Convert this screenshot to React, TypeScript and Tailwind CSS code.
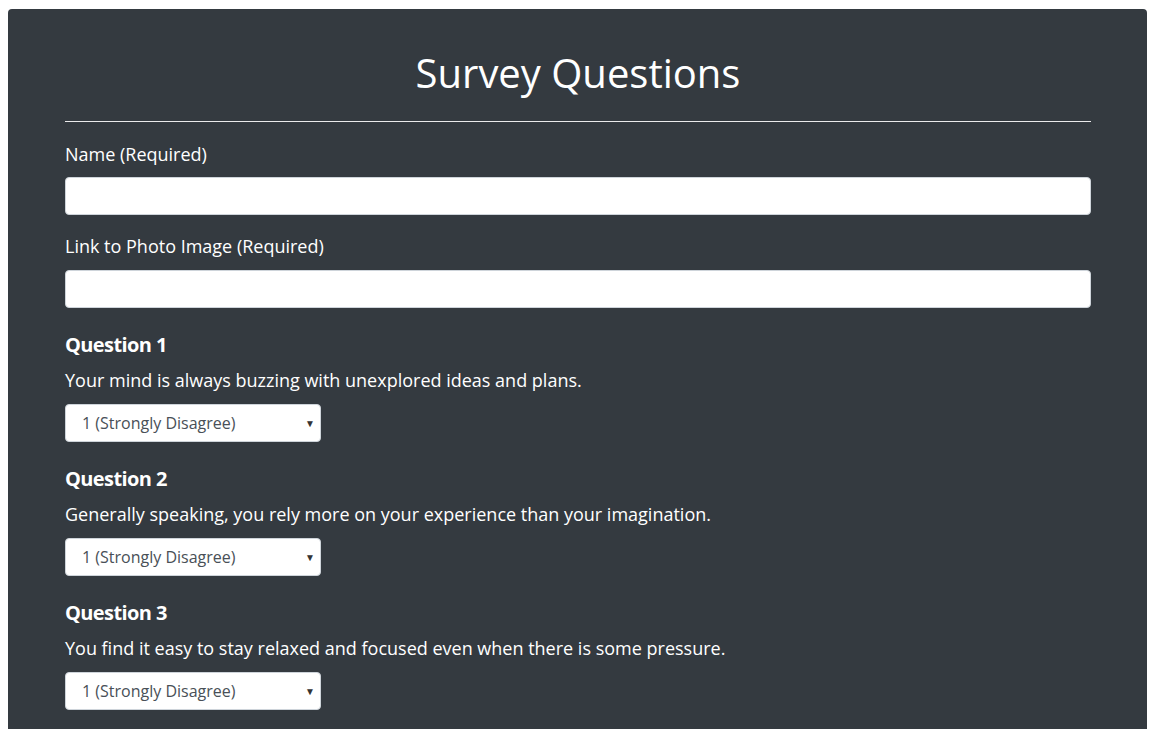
import React from "react";

const questions = [
  "Your mind is always buzzing with unexplored ideas and plans.",
  "Generally speaking, you rely more on your experience than your imagination.",
  "You find it easy to stay relaxed and focused even when there is some pressure.",
];

function Select() {
  return (
    <div className="relative w-[256px] h-[38px] bg-white rounded-[4px] border border-[#ced4da] flex items-center">
      <span className="pl-[16px] text-[16px] text-[#495057]">1 (Strongly Disagree)</span>
      <span className="absolute right-[5px] top-[11px] text-[10px] text-[#333]">▼</span>
    </div>
  );
}

export default function App() {
  return (
    <div className="bg-white min-h-[729px] pt-[9px] pl-[8px] pr-[10px]" style={{ fontFamily: '"Open Sans", sans-serif' }}>
      <div className="bg-[#343a40] rounded-[4px] pl-[57px] pr-[56px] pt-[40px] pb-[40px] text-white">
        <h1 className="text-center text-[40px] leading-[48px] font-normal">Survey Questions</h1>
        <div className="mt-[24px] h-px bg-white/90" />
        <div className="mt-[20px] text-[18px] leading-[24px]">Name (Required)</div>
        <div className="mt-[11px] h-[38px] bg-white rounded-[4px] border border-[#ced4da]" />
        <div className="mt-[19px] text-[18px] leading-[24px]">Link to Photo Image (Required)</div>
        <div className="mt-[12px] h-[38px] bg-white rounded-[4px] border border-[#ced4da]" />
        {questions.map((q, i) => (
          <div key={i} className="mt-[25px]">
            <div className="text-[20px] leading-[24px] font-bold tracking-[-0.6px]">Question {i + 1}</div>
            <div className="mt-[11px] text-[18px] leading-[24px]">{q}</div>
            <div className="mt-[12px]">
              <Select />
            </div>
          </div>
        ))}
      </div>
    </div>
  );
}
